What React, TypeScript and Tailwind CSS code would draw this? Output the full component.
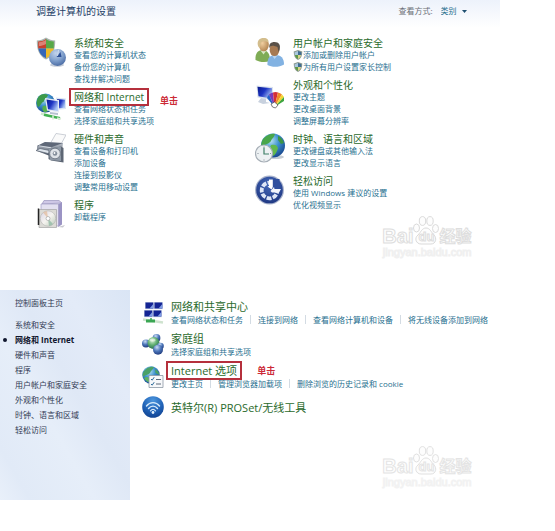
import type { ReactNode } from "react";
import clsx from "clsx";

type TCategory = {
  title: string;
  links: string[];
  icon: ReactNode;
  shield?: boolean;
  marked?: boolean;
};

// shared gradients for all the icons
const IconDefs = () => (
  <svg className="absolute size-0" aria-hidden="true">
    <defs>
      <radialGradient id="globe" cx="40%" cy="30%" r="75%">
        <stop offset="0" stopColor="#b9e4f2" />
        <stop offset="0.45" stopColor="#3f93cf" />
        <stop offset="1" stopColor="#15428a" />
      </radialGradient>
      <radialGradient id="blueBall" cx="40%" cy="25%" r="80%">
        <stop offset="0" stopColor="#c3d3ea" />
        <stop offset="0.55" stopColor="#7f9fcc" />
        <stop offset="1" stopColor="#4566a0" />
      </radialGradient>
      <radialGradient id="greenBall" cx="40%" cy="30%" r="75%">
        <stop offset="0" stopColor="#d5f0cf" />
        <stop offset="0.5" stopColor="#5fae72" />
        <stop offset="1" stopColor="#24684a" />
      </radialGradient>
      <radialGradient id="deepBall" cx="40%" cy="25%" r="80%">
        <stop offset="0" stopColor="#c9dcf5" />
        <stop offset="0.5" stopColor="#4a74b8" />
        <stop offset="1" stopColor="#1c3577" />
      </radialGradient>
      <linearGradient id="screen" x1="0" y1="0" x2="1" y2="0.6">
        <stop offset="0" stopColor="#0a1a8c" />
        <stop offset="0.5" stopColor="#1c34c4" />
        <stop offset="1" stopColor="#a9c4f5" />
      </linearGradient>
      <linearGradient id="metal" x1="0" y1="0" x2="0" y2="1">
        <stop offset="0" stopColor="#c3c9d2" />
        <stop offset="1" stopColor="#4a5362" />
      </linearGradient>
      <radialGradient id="wifi" cx="50%" cy="20%" r="85%">
        <stop offset="0" stopColor="#4b95dc" />
        <stop offset="0.6" stopColor="#1e5fb4" />
        <stop offset="1" stopColor="#103f8c" />
      </radialGradient>
      <radialGradient id="ease" cx="50%" cy="30%" r="75%">
        <stop offset="0" stopColor="#4468b8" />
        <stop offset="1" stopColor="#1d3580" />
      </radialGradient>
      <radialGradient id="skin" cx="35%" cy="35%" r="80%">
        <stop offset="0" stopColor="#f1cfa0" />
        <stop offset="1" stopColor="#a97a45" />
      </radialGradient>
      <linearGradient id="disc" x1="0" y1="0" x2="1" y2="1">
        <stop offset="0" stopColor="#d8d3e4" />
        <stop offset="0.5" stopColor="#f6f4f0" />
        <stop offset="1" stopColor="#b9c9b8" />
      </linearGradient>
    </defs>
  </svg>
);

const Icon = ({ children, small }: { children: ReactNode; small?: boolean }) => (
  <svg
    viewBox={small ? "0 0 22 22" : "0 0 30 30"}
    className={small ? "size-[22px] shrink-0" : "size-[30px] shrink-0"}
    aria-hidden="true"
  >
    {children}
  </svg>
);

const SecurityIcon = () => (
  <Icon>
    <path d="M10 0.5C7 2.6 4 3.2 0.8 3.4C0.6 12 3 19 10 22.5C17 19 19.4 12 19.2 3.4C16 3.2 13 2.6 10 .5Z" fill="#aab4b0" />
    <path d="M10 2C7.500 3.800 5 4.400 2.200 4.600V11.500H10Z" fill="#c8402c" />
    <path d="M10 2C12.500 3.800 15 4.400 17.800 4.600V11.500H10Z" fill="#58a848" />
    <path d="M2.400 11.500C3.200 16 5.500 19 10 21.200V11.500Z" fill="#3567b8" />
    <path d="M17.600 11.500C16.800 16 14.500 19 10 21.200V11.500Z" fill="#eebb28" />
    <path d="M3 5.300C6 5 8 4.200 10 3v4C7 8.500 5 9 3 9Z" fill="#fff" opacity=".35" />
    <ellipse cx="21" cy="28" rx="7" ry="1.800" fill="#c5ccd8" />
    <circle cx="21.500" cy="20.500" r="8.500" fill="url(#blueBall)" />
    <path d="M20.500 20L24.500 15L25.500 20Z" fill="#2c4f96" />
    <path d="M21.500 19L22.500 13" stroke="#dfe9f7" strokeWidth=".7" />
  </Icon>
);

const NetworkIcon = () => (
  <Icon>
    <circle cx="9.500" cy="12" r="9.500" fill="url(#globe)" />
    <path d="M2 6.500C5 2.500 9 2.500 12 4C11 7.500 8 7.500 8 10.500C5 11.500 4 16 2 16C0 12.500 .5 9.500 2 6.500Z" fill="#3c9a4a" />
    <path d="M7 15c4-1 7 1 6 4c-2 2-4 2.500-5 2C6 19 6 17 7 15Z" fill="#55b04e" />
    <path d="M20 6.500L30 7.500V18L20 19Z" fill="#dce6f4" />
    <path d="M21 8L29 8.700V16.800L21 17.500Z" fill="url(#screen)" />
    <path d="M9 7L23 9V21.500L11 19.500Z" fill="#e4ebf5" />
    <path d="M10.500 8.500L21.800 10.200V20L12 18.200Z" fill="url(#screen)" />
    <path d="M14 21l8 1v2l-8-1Z" fill="#b6c1d0" />
    <path d="M5 22.500L12 24.500" stroke="#cfe8cd" strokeWidth="2.600" />
    <path d="M8 23.800l16 3.500" stroke="#42b252" strokeWidth="2.600" />
    <path d="M17 24.500v4M21 27l4 1" stroke="#d9ecd7" strokeWidth="1.600" />
  </Icon>
);

const HardwareIcon = () => (
  <Icon>
    <path d="M14 11L20 0.500L30 2L24 13Z" fill="#fafafa" stroke="#b6bcc6" strokeWidth=".7" />
    <path d="M1 13L9 9L27 10L26 18L14 23L1 18Z" fill="url(#metal)" />
    <path d="M1 13L9 9L27 10L16 14Z" fill="#5f6878" />
    <path d="M0 17.500L12 20.500l4-2.500L4 15.500Z" fill="#dfe5ec" stroke="#56606e" strokeWidth=".7" />
    <path d="M3 12.800l12 2" stroke="#e8edf4" strokeWidth=".8" />
    <path d="M12.500 16L25 13.500L27.500 15V29.500L15 27.500L12.500 26Z" fill="#5d6674" />
    <path d="M12.500 16L25 13.500V28L14 27Z" fill="#8f99a6" />
    <circle cx="19" cy="20.500" r="5.300" fill="#dfe3e8" stroke="#5d6673" strokeWidth=".7" />
    <circle cx="19" cy="20.500" r="2.300" fill="#848e9b" />
    <circle cx="18.500" cy="20" r=".9" fill="#fff" />
  </Icon>
);

const ProgramsIcon = () => (
  <Icon>
    <path d="M6 5L8 1.500H23L26 4Z" fill="#cfc8e6" stroke="#9a93bd" strokeWidth=".7" />
    <path d="M22 5L26 3.500V25.500L22 28Z" fill="#9b94c4" />
    <path d="M5 5h17.500v22H5Z" fill="#e3e0f0" stroke="#a19bc4" strokeWidth=".7" />
    <path d="M22 28l7-2l-2 2.500Z" fill="#c9c9cf" />
    <path d="M3 10.500H20.500V28.500H3Z" fill="#dcdbd6" stroke="#a3a3a3" strokeWidth=".7" />
    <path d="M2.500 9.500V26" stroke="#242424" strokeWidth="1.500" />
    <circle cx="12" cy="19.500" r="7.700" fill="url(#disc)" stroke="#aaa" strokeWidth=".5" />
    <path d="M12 19.500L7 13.500A7.500 7.500 0 0 1 11 12Z" fill="#e4c1a4" opacity=".8" />
    <path d="M12 19.500L17 25A7.500 7.500 0 0 1 13 27Z" fill="#94bba6" opacity=".8" />
    <circle cx="12" cy="19.500" r="2" fill="#fff" stroke="#999" strokeWidth=".6" />
  </Icon>
);

const UsersIcon = () => (
  <Icon>
    <path d="M0.500 23C0 16 3 13.500 7 13C13 13 15 17 15 24C10 26 4 25 .5 23Z" fill="#7fac55" />
    <path d="M5.500 13.500l3 4l3-4Z" fill="#d9e6c4" />
    <ellipse cx="8.800" cy="8" rx="5" ry="6.300" fill="url(#skin)" />
    <path d="M2.800 8C2 3 5 .8 9 1C12 1 14 3 13.500 5.500C10 3.500 7 4 5.500 6L5 11C4 10.500 3 9.500 2.800 8Z" fill="#d3bd8c" />
    <path d="M12.500 28C12 21 15 18 20 18C26 18 29 21 29 27.500C24 30.500 17 30.500 12.500 28Z" fill="#82b2e2" />
    <path d="M17 18.500l2.500 3.500l3-3.500Z" fill="#b8d5f2" />
    <ellipse cx="19.500" cy="12.800" rx="4.900" ry="6.300" fill="#a77a52" />
    <path d="M14.500 11C13.500 7 16 5 19.500 5C24 5 26 8 24.500 13L23.500 15L22.500 10C20 9 17 8 15.500 9.500Z" fill="#5a5148" />
  </Icon>
);

const AppearanceIcon = () => (
  <Icon>
    <path d="M1.500 6.500L18 8V21.500L2.500 18.500Z" fill="#dbe3ee" />
    <path d="M2.500 7.800L17 9.200V19.800L3.500 17.300Z" fill="url(#screen)" />
    <path d="M6 19l5 1v3l4 1l-7 1l-5-2Z" fill="#c8d1de" />
    <path d="M19.500 28L12 19A11 11 0 0 1 14 15.500Z" fill="#2463c8" />
    <path d="M19.500 28L14 15.500A9 9 0 0 1 18 13.500Z" fill="#7a38b8" />
    <path d="M19.500 28L18 13.500A8 8 0 0 1 23 13.500Z" fill="#d42d38" />
    <path d="M19.500 28L23 13.500A8 8 0 0 1 27 15.500Z" fill="#ef8b27" />
    <path d="M19.500 28L27 15.500L29 18Z" fill="#f2d82e" />
    <path d="M19.500 28L29 18V22Z" fill="#3fa540" />
    <path d="M16 25l3.500-2l3.500 3l-2.500 3l-3-1Z" fill="#fff" stroke="#444" strokeWidth=".7" />
  </Icon>
);

const ClockIcon = () => (
  <Icon>
    <ellipse cx="20" cy="24" rx="9" ry="2" fill="#c6cdd4" />
    <circle cx="18" cy="12.500" r="12" fill="url(#globe)" />
    <path d="M9 5C13 1 17 .5 20 1C19 5 17 5 16 8C14 11 10 11 7 14C5.500 11 7 7 9 5Z" fill="#49a64a" />
    <path d="M16 12c4-1 6 0 7 3c-1 4-3 7-5 8c-2-3-4-7-2-11Z" fill="#62b84c" />
    <path d="M23 3c3 1 5 4 6 7l-3 1l-3-4Z" fill="#3c9546" />
    <circle cx="9" cy="20.500" r="8.500" fill="#edf1f3" stroke="#a7afb7" strokeWidth="1.200" />
    <path d="M9 14.500V21H14" stroke="#3f8068" strokeWidth="1.200" fill="none" />
    <path d="M9 13.500v1M9 26.500v1M2.500 20.500h1M15 20.500h1" stroke="#6b7680" strokeWidth=".8" />
  </Icon>
);

const EaseIcon = () => (
  <Icon>
    <circle cx="14.500" cy="15" r="14.500" fill="#a9b3cc" />
    <circle cx="14.500" cy="15" r="13.300" fill="url(#ease)" />
    <circle cx="14.500" cy="15.500" r="7.800" fill="none" stroke="#dfe7f6" strokeWidth="3.800" strokeDasharray="4.800 1.300" strokeDashoffset="2" />
    <path d="M14.500 4h10v10.500h-10Z" fill="#2f4f9e" />
    <path d="M14 4.500h3.800V12l-1.300 2.500l-4-3l1.500-.5Z" fill="#fff" />
    <path d="M15.500 16l3.500-4l.5 2h6.500l-2 3.500h-7Z" fill="#f3f6fc" />
  </Icon>
);

const SharingIcon = () => (
  <Icon small>
    {[
      [3, 0],
      [12, 0],
      [2, 8],
      [11, 8],
    ].map(([x, y]) => (
      <g key={`${x}-${y}`}>
        <rect x={x} y={y} width="8.800" height="7.200" fill="#cdd6e6" />
        <rect x={x + 0.5} y={y + 0.5} width="7.800" height="6" fill="#142494" />
        <path d={`M${x + 4.500} ${y + 6.500}L${x + 8.300} ${y + 2}V${y + 6.500}Z`} fill="#7f9be4" />
      </g>
    ))}
    <path d="M1 17.500L21 20.500" stroke="#cfe3cf" strokeWidth="2.400" />
    <path d="M4 19h9" stroke="#3aa653" strokeWidth="3" />
    <path d="M9 16v3" stroke="#3aa653" strokeWidth="1.500" />
  </Icon>
);

const HomegroupIcon = () => (
  <Icon small>
    <circle cx="14.500" cy="4" r="3.900" fill="url(#deepBall)" />
    <circle cx="4" cy="9.500" r="4" fill="url(#deepBall)" />
    <circle cx="11.500" cy="9" r="6" fill="url(#greenBall)" />
    <circle cx="18.500" cy="12" r="3.300" fill="url(#deepBall)" />
    <circle cx="16" cy="15.800" r="5" fill="url(#deepBall)" />
    <ellipse cx="10.500" cy="6" rx="3" ry="1.600" fill="#fff" opacity=".5" />
  </Icon>
);

const InternetOptionsIcon = () => (
  <Icon small>
    <circle cx="9" cy="9" r="8.700" fill="url(#globe)" />
    <path d="M3 4C6 .5 10 .5 12 1C11 4 9 4 8 7C6 9 3 9 1 11C0 8 1 6 3 4Z" fill="#4aa168" />
    <path d="M4 11c3 0 4 2 3 5c-2 0-4-2-5-4Z" fill="#5db462" />
    <path d="M13 3c2 1 4 3 4.500 6l-4-2Z" fill="#4aa168" />
    <path d="M7 9.500H21V21.500H7Z" fill="#f7f8fa" stroke="#8d98a4" strokeWidth=".8" />
    <path d="M9 13l1.200 1.200l2-3M9 18l1.200 1.200l2-3" stroke="#2f6d9b" strokeWidth="1" fill="none" />
    <path d="M14 13.500h5M14 18h5" stroke="#5c6b7b" strokeWidth="1.200" />
  </Icon>
);

const WirelessIcon = () => (
  <Icon small>
    <circle cx="11" cy="11" r="10.800" fill="url(#wifi)" />
    <g fill="none" stroke="#d3e8fa" strokeLinecap="round">
      <path d="M4.500 10C8 5.500 14 5.500 17.500 10" strokeWidth="1.400" />
      <path d="M6.500 12.500C9 9.300 13 9.300 15.500 12.500" strokeWidth="1.400" />
      <path d="M8.500 14.800C10 13 12 13 13.500 14.800" strokeWidth="1.300" />
    </g>
    <circle cx="11" cy="16.500" r="1.400" fill="#e4f2fd" />
  </Icon>
);

const UacShield = () => (
  <svg viewBox="0 0 10 10" className="size-[10px] shrink-0" aria-hidden="true">
    <path d="M5 0L9.300 1.500C9.300 6 8 8.500 5 10C2 8.500 .7 6 .7 1.500Z" fill="#8c9a90" />
    <path d="M5 1L1.700 2.200V5H5Z" fill="#aac7dc" />
    <path d="M5 1L8.300 2.200V5H5Z" fill="#3f6c94" />
    <path d="M2 5C2.300 7 3.500 8.300 5 9V5Z" fill="#5d9a45" />
    <path d="M8 5C7.700 7 6.500 8.300 5 9V5Z" fill="#d9d488" />
  </svg>
);

// red frame with the "click" note beside it
const Callout = ({ low }: { low?: boolean }) => (
  <>
    <span className="absolute -inset-x-[5px] -inset-y-[3px] border-2 border-[#b5303c]" />
    <span
      className={clsx(
        "absolute left-full text-[9px] font-bold whitespace-nowrap text-[#cc2a36]",
        low ? "top-1 ml-4" : "top-0 ml-5"
      )}
    >
      单击
    </span>
  </>
);

const Category = ({ title, links, icon, shield, marked }: TCategory) => (
  <section className="flex items-start gap-2">
    {icon}
    <div>
      <h2 className="relative w-fit text-[10px] leading-[12px] text-[#2a6a2c]">
        <a href="#">{title}</a>
        {marked && <Callout low />}
      </h2>
      <ul className="text-[8px] leading-[12px] text-[#28708f]">
        {links.map((link) => (
          <li key={link} className="flex items-center">
            {shield && <UacShield />}
            <a href="#" className="whitespace-nowrap">{link}</a>
          </li>
        ))}
      </ul>
    </div>
  </section>
);

const NetworkItem = ({ title, links, icon, marked }: TCategory) => (
  <section className="flex items-center gap-[7px]">
    {icon}
    <div>
      <h2 className="relative w-fit text-[11px] leading-[13px] text-[#2a6a2c]">
        <a href="#">{title}</a>
        {marked && <Callout />}
      </h2>
      {links.length > 0 && (
        <ul className="flex text-[8px] leading-[13px] text-[#28708f]">
          {links.map((link, i) => (
            <li key={link} className="flex items-center whitespace-nowrap">
              {i > 0 && <span className="mx-[7px] h-[9px] w-px bg-[#d3dbe3]" />}
              <a href="#">{link}</a>
            </li>
          ))}
        </ul>
      )}
    </div>
  </section>
);

const Watermark = ({ faint }: { faint?: boolean }) => (
  <div
    className={clsx(
      "absolute right-7 flex flex-col text-[#fdfdfd]",
      faint ? "bottom-3 opacity-80" : "bottom-8"
    )}
  >
    <div className="flex items-end leading-[20px] font-bold [-webkit-text-stroke:1px_#dedede]">
      <span className="font-['Liberation_Sans'] text-[20px]">Bai</span>
      <span className="relative flex h-[30px] w-[26px] items-end justify-center">
        <svg viewBox="0 0 26 30" className="absolute inset-0" aria-hidden="true">
          <g fill="#fdfdfd" stroke="#dadada" strokeWidth="1">
            <ellipse cx="3.500" cy="12" rx="3" ry="4" />
            <ellipse cx="9.500" cy="5" rx="3.200" ry="4.400" />
            <ellipse cx="17" cy="5" rx="3.200" ry="4.400" />
            <ellipse cx="22.500" cy="12.500" rx="3" ry="4" />
            <path d="M13 12C17 12 18 16 21 19C24 22 23 28 18 28C15 28 11 28 8 28C3 28 1 22 5 19C8 16 9 12 13 12Z" />
          </g>
        </svg>
        <span className="relative font-['Liberation_Sans'] text-[13px] leading-[18px]">du</span>
      </span>
      <span className="text-[16px]">经验</span>
    </div>
    <span className="text-right font-['Liberation_Sans'] text-[11px] leading-[12px] [-webkit-text-stroke:1px_#f0f0f0]">
      jingyan.baidu.com
    </span>
  </div>
);

const leftCategories: TCategory[] = [
  {
    title: "系统和安全",
    links: ["查看您的计算机状态", "备份您的计算机", "查找并解决问题"],
    icon: <SecurityIcon />,
  },
  {
    title: "网络和 Internet",
    links: ["查看网络状态和任务", "选择家庭组和共享选项"],
    icon: <NetworkIcon />,
    marked: true,
  },
  {
    title: "硬件和声音",
    links: ["查看设备和打印机", "添加设备", "连接到投影仪", "调整常用移动设置"],
    icon: <HardwareIcon />,
  },
  { title: "程序", links: ["卸载程序"], icon: <ProgramsIcon /> },
];

const rightCategories: TCategory[] = [
  {
    title: "用户帐户和家庭安全",
    links: ["添加或删除用户帐户", "为所有用户设置家长控制"],
    icon: <UsersIcon />,
    shield: true,
  },
  {
    title: "外观和个性化",
    links: ["更改主题", "更改桌面背景", "调整屏幕分辨率"],
    icon: <AppearanceIcon />,
  },
  {
    title: "时钟、语言和区域",
    links: ["更改键盘或其他输入法", "更改显示语言"],
    icon: <ClockIcon />,
  },
  {
    title: "轻松访问",
    links: ["使用 Windows 建议的设置", "优化视频显示"],
    icon: <EaseIcon />,
  },
];

const networkItems: TCategory[] = [
  {
    title: "网络和共享中心",
    links: ["查看网络状态和任务", "连接到网络", "查看网络计算机和设备", "将无线设备添加到网络"],
    icon: <SharingIcon />,
  },
  { title: "家庭组", links: ["选择家庭组和共享选项"], icon: <HomegroupIcon /> },
  {
    title: "Internet 选项",
    links: ["更改主页", "管理浏览器加载项", "删除浏览的历史记录和 cookie"],
    icon: <InternetOptionsIcon />,
    marked: true,
  },
  { title: "英特尔(R) PROSet/无线工具", links: [], icon: <WirelessIcon /> },
];

const sideLinks = [
  "系统和安全",
  "网络和 Internet",
  "硬件和声音",
  "程序",
  "用户帐户和家庭安全",
  "外观和个性化",
  "时钟、语言和区域",
  "轻松访问",
];

const App = () => {
  return (
    <main className="min-h-screen bg-white font-['Open_Sans','Noto_Sans_CJK_SC',sans-serif]">
      <IconDefs />

      {/* Control panel home */}
      <div className="relative w-[90%] bg-linear-to-b from-[#edf2fb] to-white to-[28px] pb-[61px]">
        <header className="flex items-center justify-between pt-1 pr-[33px] pl-9">
          <h1 className="text-[10px] leading-[14px] text-[#1f3f66]">调整计算机的设置</h1>
          <div className="flex items-center text-[8px] leading-[12px]">
            <label htmlFor="view" className="mr-2 text-[#6a6f76]">查看方式:</label>
            <select id="view" className="w-[17px] appearance-none text-[#28708f]" defaultValue="类别">
              <option>类别</option>
            </select>
            <svg viewBox="0 0 5 3" className="ml-1 h-[3px] w-[5px]" aria-hidden="true">
              <path d="M0 0h5L2.500 3Z" fill="#1f4f70" />
            </svg>
          </div>
        </header>
        <div className="grid grid-cols-[219px_1fr] pt-[19px] pl-9">
          <div className="flex flex-col gap-[6px]">
            {leftCategories.map((item) => (
              <Category key={item.title} {...item} />
            ))}
          </div>
          <div className="flex flex-col gap-[6px]">
            {rightCategories.map((item) => (
              <Category key={item.title} {...item} />
            ))}
          </div>
        </div>
        <Watermark />
      </div>

      {/* Network and Internet */}
      <div className="relative flex w-[90%]">
        <nav className="w-[130px] shrink-0 bg-[linear-gradient(60deg,#e9f0fa_0%,#e1eaf7_12%,#e6eef9_38%,#dfe8f6_55%,#e3ebf8_75%,#dae5f5_100%)] pt-[5px] pb-[63px] text-[8px] leading-[15px] text-[#323b54]">
          <a href="#" className="ml-[15px]">控制面板主页</a>
          <ul className="mt-[7px]">
            {sideLinks.map((link, i) => (
              <li
                key={link}
                className={clsx("flex items-center", i === 1 && "font-bold text-[#10162e]")}
              >
                <span className="flex w-[15px] pl-[3px]">
                  {i === 1 && <span className="size-[4px] rounded-full bg-[#10162e]" />}
                </span>
                <a href="#">{link}</a>
              </li>
            ))}
          </ul>
        </nav>
        <div className="flex flex-col gap-[6px] pt-[10px] pl-3">
          {networkItems.map((item) => (
            <NetworkItem key={item.title} {...item} />
          ))}
        </div>
        <Watermark faint />
      </div>
    </main>
  );
};

export default App;
